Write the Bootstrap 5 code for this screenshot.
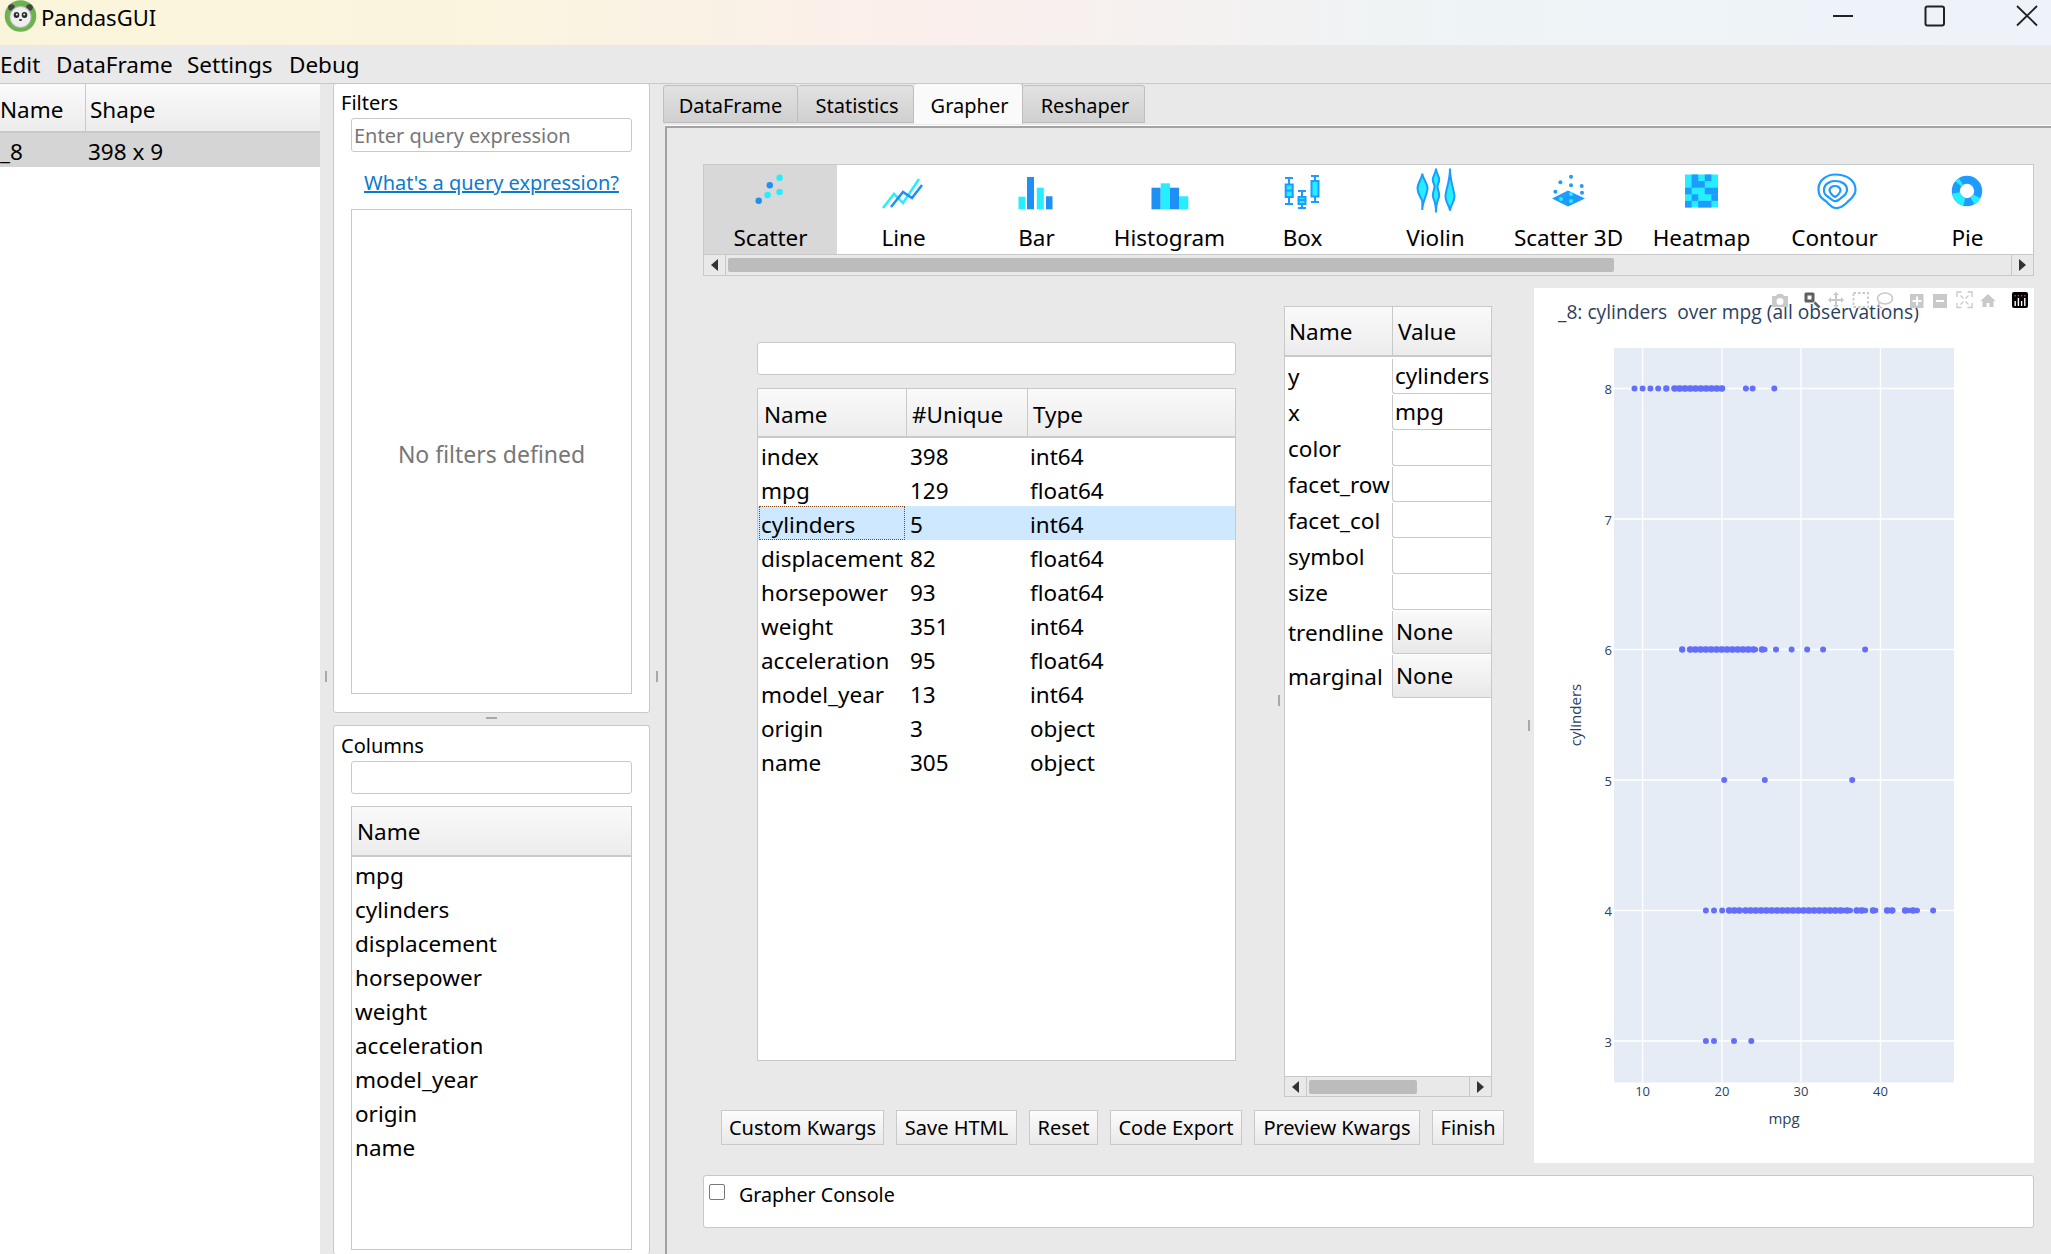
<!DOCTYPE html>
<html lang="en">
<head>
<meta charset="utf-8">
<title>PandasGUI</title>
<link href="https://cdn.jsdelivr.net/npm/bootstrap@5.3.0/dist/css/bootstrap.min.css" rel="stylesheet">
<style>
:root{--line:#c9c9c9;--bg:#e9e9e9;--fs:22.5px}
html,body{height:100%}
body{background:var(--bg);font-family:"Noto Sans","Open Sans",sans-serif;font-size:var(--fs);line-height:1.2;color:#000;overflow:hidden}
.titlebar{height:45px;background:linear-gradient(90deg,#faf5da 0%,#faf4e0 25%,#fbefec 45%,#eef4f6 72%,#eef3fb 100%);position:relative}
.logo{margin-left:4px;width:34px;height:34px;flex:none}
.app-title{margin-left:3px;margin-top:4px;font-size:22px}
.menubar{height:39px;border-bottom:1px solid var(--line);background:var(--bg);padding-top:6px;gap:0}
.menubar span{display:block}
.m1{width:56px}.m2{width:131px}.m3{width:102px}
.hdr{background:linear-gradient(#fafafa,#ececec);border-bottom:2px solid var(--line)}
.left{width:320px;background:#fff;flex:none;position:relative}
.grid-df{display:grid;grid-template-columns:85px 1fr}
.df-h{height:47px;display:flex;align-items:center;padding-top:4px}
.df-h+.df-h{border-left:1px solid var(--line);padding-left:4px}
.df-r{height:34px;background:#d5d5d5;display:flex;align-items:center;padding-top:2px}
.df-r+.df-r{padding-left:3px}
.split-v{width:13px;flex:none;position:relative}
.grip-v{position:absolute;width:2px;height:11px;background:#a8a8a8}
.grip-h{position:absolute;height:2px;width:11px;background:#a8a8a8}
.side{width:317px;flex:none;display:flex;flex-direction:column;margin-top:-1px}
.group{background:#fff;border:1px solid var(--line);border-radius:3px;padding:0 17px 0 17px}
.g-filters{height:630px;margin-bottom:12px;position:relative}
.g-cols{flex:1;border-bottom:0}
.g-label{font-size:20px;margin-left:-10px;height:34px;padding-top:7px}
.g-cols .g-label{height:35px;padding-top:8px}
.form-control.qt{height:34px;border:1px solid var(--line);border-radius:3px;padding:3px 2px 1px;font-size:20px;background:#fff;color:#777;line-height:28px;box-shadow:none}
a.q-link{display:block;text-align:center;color:#0a7bd0;font-size:20px;margin-top:19px;margin-bottom:12px;height:26px}
.nofilter{height:485px;border:1px solid var(--line);color:#777;display:flex;align-items:center;justify-content:center;padding-top:7px;font-size:23px}
.tree{border:1px solid var(--line);background:#fff}
.cols-input{height:33px!important}
.cols-tree{margin-top:12px;height:444px}
.cols-h{height:50px;padding-left:5px;display:flex;align-items:center;padding-top:1px}
.row-h{height:34px;display:flex;align-items:center;padding-left:3px}
.row-h.first{margin-top:1px}
.pane-col{flex:1;min-width:0;margin-left:15px;display:flex;flex-direction:column}
.nav-tabs.qt{border:0;height:42px;margin-left:-2px;padding-top:1px;gap:0;flex-wrap:nowrap}
.nav-tabs.qt .nav-link{height:38px;margin:0;padding:3px 0 0;border:1px solid #bdbdbd;border-bottom:1px solid #bdbdbd;border-radius:3px 3px 0 0;background:linear-gradient(#e2e2e2,#d0d0d0);color:#000;display:flex;align-items:center;justify-content:center;font-size:20px}
.nav-tabs.qt .t1{width:135px}
.nav-tabs.qt .t2{width:116px;border-left:0;padding-left:3px}
.nav-tabs.qt .t3{width:109px;height:41px;margin-top:-2px;background:#fafafa;border-bottom:0;border-left:0;padding-left:3px}
.nav-tabs.qt .t4{width:122px;border-left:0;padding-left:3px}
.pane{flex:1;border-top:2px solid #a3a3a3;border-left:2px solid #a3a3a3;box-shadow:0 -1px 0 #fff;padding:36px 17px 0 36px;min-height:0}
.charts{height:112px;border:1px solid var(--line);background:#fff;display:flex;flex-direction:column}
.chart-items{display:flex;height:90px}
.chart-item{width:133px;flex:none;text-align:center}
.chart-item.on{background:#d8d8d8}
.chart-item svg{display:block;margin:2px 0 0 calc(50% - 25px);width:48px;height:48px}
.chart-item span{display:block;margin-top:9px;line-height:28px}
.sb{background:var(--bg);border-top:1px solid var(--line);display:flex;align-items:center;height:21px}
.sb .ar{flex:none;width:22px;height:100%;display:flex;align-items:center;justify-content:center}
.sb .tr{flex:1;position:relative;height:100%;display:flex;align-items:center}
.sb .th{height:14px;background:#bcbcbc;border-radius:2px}
.sb .l{border-right:1px solid var(--line)}.sb .r{border-left:1px solid var(--line)}
.th-main{width:886px;margin-left:2px}
.th-par{width:108px;margin-left:2px}
.work{display:flex;height:875px;margin-top:12px}
.work-l{width:831px;flex:none;display:flex;flex-direction:column;position:relative}
.top-row{display:flex;height:810px}
.col-a{width:581px;flex:none;padding:54px 48px 37px 54px;display:flex;flex-direction:column}
.col-a .form-control.qt{height:33px;flex:none}
.t-main{margin-top:13px;flex:1;position:relative}
.g3{display:grid;grid-template-columns:148px 121px 1fr}
.hcell{display:flex;align-items:center;padding-left:5px;padding-top:3px;border-left:1px solid var(--line)}
.hcell:first-child{border-left:0;padding-left:6px}
.g3.rw{height:34px;align-items:center}
.g3.rw>div{padding-left:3px;padding-top:3px}
.g3.rw>div+div{padding-left:4px}
.g3.rw>div+div+div{padding-left:3px}
.g3.rw.sel{background:#cde8ff;position:relative}
.g3.rw.sel>div:first-child{outline:1px dotted #7a4a1a;outline-offset:-1px;height:34px;margin-left:1px;padding-left:2px;display:flex;align-items:center;width:146px}
.hdr-full{height:49px;display:grid;grid-template-columns:148px 121px 1fr}
.par{width:208px;flex:none;margin-top:18px;margin-bottom:1px;display:flex;flex-direction:column;background:#fff;border:1px solid var(--line);border-bottom:0;position:relative}
.par-h{display:grid;grid-template-columns:107px 1fr;height:50px;flex:none}
.par-h .hcell{padding-top:1px}
.par-h .hcell:first-child{padding-left:4px}
.par-rows{flex:1;min-height:0;padding-top:1px}
.par-row{display:grid;grid-template-columns:107px 1fr;height:36px;align-items:center}
.par-row.cb{height:44px}
.par-row .n{padding-left:3px;white-space:nowrap}
.val{height:35px;border:1px solid var(--line);border-right:0;border-top:0;border-radius:0 0 0 3px;padding-left:2px;display:flex;align-items:center;background:#fff}
.val.cbx{height:43px;background:linear-gradient(#fafafa,#e8e8e8);padding-left:3px}
.par .sb{height:21px;border-bottom:1px solid var(--line);margin:0 -1px;border-left:1px solid var(--line);border-right:1px solid var(--line)}
.btns{display:flex;gap:12px;margin-top:12px;padding-left:18px}
.btn.qt{height:35px;padding:0;border:1px solid var(--line);border-radius:0;background:linear-gradient(#fcfcfc,#e9e9e9);color:#000;font-size:20px;line-height:1;display:flex;align-items:center;justify-content:center}
.b1{width:163px}.b2{width:121px}.b3{width:69px}.b4{width:132px}.b5{width:166px}.b6{width:72px}
.plot{width:500px;flex:none;background:#fff;position:relative}
.plot svg{display:block}
.console{height:53px;margin-top:12px;border:1px solid var(--line);border-radius:3px;background:#fff;padding:7px 5px;display:flex;gap:14px;font-size:19.7px;line-height:1.2}
.console .form-check-input{width:16px;height:16px;margin:1px 0 0;border:1px solid #777;border-radius:2px;flex:none}
.g1{left:5px;top:587px}.g2{left:152px;bottom:-7px}.g3g{left:575px;top:407px}.g4{left:825px;top:432px}.g5{left:-9px;top:587px}
</style>
</head>
<body class="d-flex flex-column">
<header class="titlebar d-flex align-items-start">
<svg class="logo" viewBox="0 0 34 34"><circle cx="16.500" cy="16" r="15.800" fill="#6cb24e"/><circle cx="7.500" cy="7.500" r="3.300" fill="#444"/><circle cx="25.500" cy="7.500" r="3.300" fill="#444"/><circle cx="16.500" cy="17" r="11" fill="#bdbdbd"/><circle cx="16.500" cy="17" r="10" fill="#efefef"/><ellipse cx="12.500" cy="15" rx="2.800" ry="3" fill="#2a2a2a"/><ellipse cx="20.500" cy="15" rx="2.800" ry="3" fill="#2a2a2a"/><circle cx="12.800" cy="14.600" r="1" fill="#eee"/><circle cx="20.200" cy="14.600" r="1" fill="#eee"/><ellipse cx="16.500" cy="20" rx="1.600" ry="1" fill="#333"/></svg>
<span class="app-title">PandasGUI</span>
<div class="ms-auto d-flex align-items-center">
<svg width="218" height="45" viewBox="1833 0 218 45" fill="none" stroke="#222"><path d="M1833 16h20" stroke-width="2"/><rect x="1925.500" y="6.500" width="18.500" height="19" rx="2" stroke-width="2"/><path d="M2017 6l20 19.500M2037 6l-20 19.500" stroke-width="1.800"/></svg>
</div>
</header>
<nav class="menubar d-flex">
<span class="m1">Edit</span><span class="m2">DataFrame</span><span class="m3">Settings</span><span>Debug</span>
</nav>
<main class="d-flex flex-grow-1 overflow-hidden">
<aside class="left">
<div class="grid-df hdr"><div class="df-h">Name</div><div class="df-h">Shape</div></div>
<div class="grid-df"><div class="df-r">_8</div><div class="df-r">398 x 9</div></div>
</aside>
<div class="split-v"><i class="grip-v g1"></i></div>
<section class="side">
<div class="group g-filters">
<div class="g-label">Filters</div>
<div class="form-control qt">Enter query expression</div>
<a class="q-link" href="#">What's a query expression?</a>
<div class="nofilter">No filters defined</div>
<i class="grip-h g2"></i>
</div>
<div class="group g-cols">
<div class="g-label">Columns</div>
<div class="form-control qt cols-input"></div>
<div class="tree cols-tree">
<div class="hdr cols-h">Name</div>
<div class="row-h first">mpg</div><div class="row-h">cylinders</div><div class="row-h">displacement</div><div class="row-h">horsepower</div><div class="row-h">weight</div><div class="row-h">acceleration</div><div class="row-h">model_year</div><div class="row-h">origin</div><div class="row-h">name</div>
</div>
</div>
</section>
<section class="pane-col position-relative">
<i class="grip-v g5"></i>
<ul class="nav nav-tabs qt">
<li class="nav-item"><a class="nav-link t1" href="#">DataFrame</a></li>
<li class="nav-item"><a class="nav-link t2" href="#">Statistics</a></li>
<li class="nav-item"><a class="nav-link active t3" href="#">Grapher</a></li>
<li class="nav-item"><a class="nav-link t4" href="#">Reshaper</a></li>
</ul>
<div class="pane">
<div class="charts">
<div class="chart-items">
<div class="chart-item on"><svg viewBox="746 167 48 48"><circle cx="779.600" cy="177.700" r="3.200" fill="#25eeff"/><circle cx="769.800" cy="185.300" r="3.200" fill="#1e8ff5"/><circle cx="779.600" cy="192" r="3.200" fill="#25eeff"/><circle cx="767.600" cy="195" r="3.200" fill="#25eeff"/><circle cx="758.700" cy="200.700" r="3.200" fill="#1e8ff5"/></svg><span>Scatter</span></div>
<div class="chart-item"><svg viewBox="879 167 48 48" fill="none" stroke-width="2.500"><path d="M883 208l11-14 9 9 16-24" stroke="#25eeff"/><path d="M891 207l12-15 9 6 10-13" stroke="#1e8ff5"/></svg><span>Line</span></div>
<div class="chart-item"><svg viewBox="1012 167 48 48"><rect x="1018.500" y="196.700" width="7" height="12.600" fill="#25eeff"/><rect x="1027" y="177" width="7" height="32.300" fill="#1e8ff5"/><rect x="1036.800" y="187.700" width="7" height="21.600" fill="#25eeff"/><rect x="1046" y="196.300" width="6.500" height="13" fill="#1e8ff5"/></svg><span>Bar</span></div>
<div class="chart-item"><svg viewBox="1145 167 48 48"><rect x="1151.500" y="187.700" width="9.200" height="21.600" fill="#1e8ff5"/><rect x="1160.700" y="183.300" width="9.200" height="26" fill="#25eeff"/><rect x="1169.900" y="187.700" width="9.200" height="21.600" fill="#1e8ff5"/><rect x="1179.100" y="196.300" width="9.200" height="13" fill="#25eeff"/></svg><span>Histogram</span></div>
<div class="chart-item"><svg viewBox="1278 167 48 48" stroke="#1e9bff" stroke-width="2" fill="#25eeff"><path d="M1285 178h8M1289 178v6M1289 197v7M1285 204h8M1298 191h8M1302 191v6M1302 204v4M1298 208h8M1311 176h8M1315 176v5M1315 197v5M1311 202h8" fill="none"/><rect x="1285.700" y="184.500" width="7" height="12.500"/><path d="M1286 190.500h6"/><rect x="1298.500" y="197" width="7" height="7"/><path d="M1298.500 200h7"/><rect x="1311.500" y="181" width="7" height="15.500"/></svg><span>Box</span></div>
<div class="chart-item"><svg viewBox="1411 167 48 48" stroke="#1e9bff" stroke-width="2" fill="#25eeff"><path d="M1422.300 173.500C1422.300 178 1417.500 183 1417.500 188.500S1421 197 1422.300 201L1422.300 210C1422.300 202 1427.500 194 1427.500 188.500S1422.300 178 1422.300 173.500Z"/><path d="M1436 168.500C1436 173 1432.800 176 1432.800 179.500S1434.500 184 1434.500 186.500S1432.800 192 1432.800 195.500S1436 200 1436 212.500C1436 200 1439.200 199 1439.200 195.500S1437.500 189 1437.500 186.500S1439.200 183 1439.200 179.500S1436 173 1436 168.500Z"/><path d="M1450 168.500C1450 182 1445.500 190 1445.500 196.500S1449 204 1450 210.500C1451 204 1454.500 202 1454.500 196.500S1450 182 1450 168.500Z"/></svg><span>Violin</span></div>
<div class="chart-item"><svg viewBox="1544 167 48 48"><path d="M1568 190.500l17 8-17 8-16-8z" fill="#1e9bff"/><g fill="#1e9bff"><circle cx="1571" cy="176.700" r="2"/><circle cx="1560.400" cy="182.300" r="2"/><circle cx="1571" cy="185.300" r="2"/><circle cx="1581.700" cy="186" r="2"/><circle cx="1555.400" cy="191.700" r="2"/><circle cx="1582" cy="192.700" r="2"/></g><g fill="#25eeff"><circle cx="1571" cy="194" r="2"/><circle cx="1561" cy="199" r="2"/><circle cx="1571" cy="201" r="2"/></g></svg><span>Scatter 3D</span></div>
<div class="chart-item"><svg viewBox="1677 167 48 48"><rect x="1685" y="174.500" width="33" height="33" fill="#25eeff"/><g fill="#1e9bff"><rect x="1691.600" y="174.500" width="6.600" height="6.600"/><rect x="1704.800" y="174.500" width="6.600" height="6.600"/><rect x="1691.600" y="181.100" width="13.200" height="6.600"/><rect x="1685" y="187.700" width="6.600" height="6.600"/><rect x="1704.800" y="187.700" width="13.200" height="6.600"/><rect x="1691.600" y="194.300" width="6.600" height="6.600"/><rect x="1711.400" y="194.300" width="6.600" height="6.600"/><rect x="1685" y="200.900" width="6.600" height="6.600"/><rect x="1698.200" y="200.900" width="13.200" height="6.600"/></g></svg><span>Heatmap</span></div>
<div class="chart-item"><svg viewBox="1810 167 48 48" fill="none" stroke="#1e9bff" stroke-width="2.200"><path d="M1835 174.500c11 0 20.500 5 20.500 15.500 0 6-4.500 8.500-8.500 12.500-3 3-7.500 6-12 5.500-5-1-6.500-5.500-11.500-8.500-3-2-5-5.500-5-10.500 0-9.500 9.500-14.500 16.500-14.500z"/><path d="M1835 181c6.500 0 12 3 12 9 0 4-3 6-6 8-2 2-4 4-7 3-3-1-4-3-7-5-2-1-3-3-3-6 0-6 6-9 11-9z"/><path d="M1835 186c3 0 5.500 2 5.500 4 0 3-3.500 6-5.500 7-2-1-5.500-4-5.500-7 0-2 2.500-4 5.500-4z"/></svg><span>Contour</span></div>
<div class="chart-item"><svg viewBox="1943 167 48 48" fill="none" stroke-width="8"><circle cx="1967" cy="191" r="11.200" stroke="#1e9bff"/><circle cx="1967" cy="191" r="11.200" stroke="#25eeff" pathLength="100" stroke-dasharray="9 12 18 14 5 42" stroke-dashoffset="-8"/></svg><span>Pie</span></div>
</div>
<div class="sb"><div class="ar l"><svg width="9" height="12" viewBox="0 0 9 12"><path d="M8 0v12L1 6z" fill="#333"/></svg></div><div class="tr"><div class="th th-main"></div></div><div class="ar r"><svg width="9" height="12" viewBox="0 0 9 12"><path d="M1 0v12l7-6z" fill="#333"/></svg></div></div>
</div>
<div class="work">
<div class="work-l">
<div class="top-row">
<div class="col-a">
<div class="form-control qt"></div>
<div class="tree t-main">
<div class="hdr hdr-full"><div class="hcell">Name</div><div class="hcell">#Unique</div><div class="hcell">Type</div></div>
<div class="g3 rw"><div>index</div><div>398</div><div>int64</div></div>
<div class="g3 rw"><div>mpg</div><div>129</div><div>float64</div></div>
<div class="g3 rw sel"><div>cylinders</div><div>5</div><div>int64</div></div>
<div class="g3 rw"><div>displacement</div><div>82</div><div>float64</div></div>
<div class="g3 rw"><div>horsepower</div><div>93</div><div>float64</div></div>
<div class="g3 rw"><div>weight</div><div>351</div><div>int64</div></div>
<div class="g3 rw"><div>acceleration</div><div>95</div><div>float64</div></div>
<div class="g3 rw"><div>model_year</div><div>13</div><div>int64</div></div>
<div class="g3 rw"><div>origin</div><div>3</div><div>object</div></div>
<div class="g3 rw"><div>name</div><div>305</div><div>object</div></div>
</div>
</div>
<i class="grip-v g3g"></i>
<div class="par">
<div class="par-h hdr"><div class="hcell">Name</div><div class="hcell">Value</div></div>
<div class="par-rows">
<div class="par-row"><div class="n">y</div><div class="val">cylinders</div></div>
<div class="par-row"><div class="n">x</div><div class="val">mpg</div></div>
<div class="par-row"><div class="n">color</div><div class="val"></div></div>
<div class="par-row"><div class="n">facet_row</div><div class="val"></div></div>
<div class="par-row"><div class="n">facet_col</div><div class="val"></div></div>
<div class="par-row"><div class="n">symbol</div><div class="val"></div></div>
<div class="par-row"><div class="n">size</div><div class="val"></div></div>
<div class="par-row cb"><div class="n">trendline</div><div class="val cbx">None</div></div>
<div class="par-row cb"><div class="n">marginal</div><div class="val cbx">None</div></div>
</div>
<div class="sb"><div class="ar l"><svg width="9" height="12" viewBox="0 0 9 12"><path d="M8 0v12L1 6z" fill="#333"/></svg></div><div class="tr"><div class="th th-par"></div></div><div class="ar r"><svg width="9" height="12" viewBox="0 0 9 12"><path d="M1 0v12l7-6z" fill="#333"/></svg></div></div>
</div>
</div>
<div class="btns">
<button class="btn qt b1">Custom Kwargs</button>
<button class="btn qt b2">Save HTML</button>
<button class="btn qt b3">Reset</button>
<button class="btn qt b4">Code Export</button>
<button class="btn qt b5">Preview Kwargs</button>
<button class="btn qt b6">Finish</button>
</div>
<i class="grip-v g4"></i>
</div>
<div class="plot">
<svg width="500" height="875" viewBox="1534 288 500 875" font-family="Open Sans,sans-serif" fill="#2a3f5f">
<rect x="1614" y="348" width="340" height="734.500" fill="#e5ecf6"/>
<g stroke="#fff" stroke-width="1.300"><path d="M1642.600 348v734.500M1722 348v734.500M1801 348v734.500M1880.500 348v734.500"/><path d="M1614 388.500h340M1614 519h340M1614 649.500h340M1614 780h340M1614 910.500h340M1614 1041h340"/></g>
<g fill="#636efa"><circle cx="1634.500" cy="388.500" r="3"/><circle cx="1642.600" cy="388.500" r="3"/><circle cx="1650.400" cy="388.500" r="3"/><circle cx="1658.200" cy="388.500" r="3"/><circle cx="1666.300" cy="388.500" r="3.200"/><circle cx="1745.900" cy="388.500" r="3"/><circle cx="1752.600" cy="388.500" r="3"/><circle cx="1774.300" cy="388.500" r="3"/><circle cx="1682.200" cy="649.500" r="3.200"/><circle cx="1776" cy="649.500" r="3"/><circle cx="1791.600" cy="649.500" r="3"/><circle cx="1807.200" cy="649.500" r="3"/><circle cx="1823.100" cy="649.500" r="3"/><circle cx="1865.100" cy="649.500" r="3"/><circle cx="1724.200" cy="780" r="3"/><circle cx="1764.800" cy="780" r="3"/><circle cx="1852.200" cy="780" r="3"/><circle cx="1705.900" cy="910.500" r="3"/><circle cx="1714" cy="910.500" r="3"/><circle cx="1722.200" cy="910.500" r="3"/><circle cx="1933.100" cy="910.500" r="3"/><circle cx="1705.900" cy="1041" r="3"/><circle cx="1714" cy="1041" r="3"/><circle cx="1734" cy="1041" r="3"/><circle cx="1751.300" cy="1041" r="3"/></g>
<g fill="none" stroke="#636efa" stroke-linecap="round"><path stroke-width="5.600" d="M1674.400 388.500h47.800M1690 649.500h65.400M1762 649.500h2.800M1729 910.500h11M1745.200 910.500h98.800M1846.800 910.500h3.400M1856.600 910.500h8.800M1872.900 910.500h2.700M1887 910.500h5.500M1905 910.500h3.800M1912.800 910.500h4.400"/><path stroke-width="6.300" stroke-dasharray="0 5.300" d="M1674.400 388.500h47.800M1690 649.500h65.400M1762 649.500h2.800M1729 910.500h11M1745.200 910.500h98.800M1846.800 910.500h3.400M1856.600 910.500h8.800M1872.900 910.500h2.700M1887 910.500h5.500M1905 910.500h3.800M1912.800 910.500h4.400"/></g>
<text x="1558" y="319" font-size="19.200" xml:space="preserve">_8: cylinders  over mpg (all observations)</text>
<g font-size="13" text-anchor="end"><text x="1612" y="394">8</text><text x="1612" y="525">7</text><text x="1612" y="655">6</text><text x="1612" y="786">5</text><text x="1612" y="916">4</text><text x="1612" y="1047">3</text></g>
<g font-size="13" text-anchor="middle"><text x="1642.600" y="1096">10</text><text x="1722" y="1096">20</text><text x="1801" y="1096">30</text><text x="1880.500" y="1096">40</text></g>
<text x="1784" y="1124" font-size="15" text-anchor="middle">mpg</text>
<text transform="translate(1581 715) rotate(-90)" font-size="15" text-anchor="middle">cylinders</text>
<g fill="#c9c9c9"><path d="M1772 296h4l1.500-2h5l1.500 2h4v11h-16zM1780 298a3.500 3.500 0 100 7 3.500 3.500 0 000-7z" fill-rule="evenodd"/><path d="M1806 294h7v7h-7z" fill="none" stroke="#5f5f5f" stroke-width="3" stroke-linejoin="round"/><path d="M1814.500 302.500l5 5" stroke="#5f5f5f" stroke-width="2.500"/><path d="M1836 292l3 3h-2v4h4v-2l3 3-3 3v-2h-4v4h2l-3 3-3-3h2v-4h-4v2l-3-3 3-3v2h4v-4h-2z"/><rect x="1853.500" y="293" width="14.500" height="14" fill="none" stroke="#c9c9c9" stroke-width="1.800" stroke-dasharray="2.500 2"/><ellipse cx="1885" cy="298.500" rx="7.500" ry="5.500" fill="none" stroke="#c9c9c9" stroke-width="1.600"/><path d="M1879 303c-1 3 1 4 3 5" fill="none" stroke="#c9c9c9" stroke-width="1.600"/><path d="M1910 294h13.500v14h-13.500zM1916 296.500v3.500h-3.500v2h3.500v3.500h2V302h3.500v-2H1918v-3.500z" fill-rule="evenodd"/><path d="M1933 294h14v14h-14zM1936 300v2h8v-2z" fill-rule="evenodd"/><path d="M1957 297v-5h4.500M1967.500 292h4.500v5M1972 303v4.500h-4.500M1961.500 307.500H1957V303" fill="none" stroke="#c9c9c9" stroke-width="1.300"/><path d="M1960.500 295.500l3 3M1968.500 295.500l-3 3M1960.500 304.500l3-3M1968.500 304.500l-3-3" stroke="#c9c9c9" stroke-width="1.300"/><path d="M1988 294l7.500 7h-2v6h-4v-4h-3v4h-4v-6h-2z"/><rect x="2012" y="292" width="16" height="16" rx="2" fill="#000"/></g>
<g fill="#fff"><rect x="2014.500" y="301" width="1.400" height="5"/><rect x="2017.700" y="298" width="1.400" height="8"/><rect x="2020.900" y="301" width="1.400" height="5"/><rect x="2024.100" y="298" width="1.400" height="8"/></g><g fill="#e8324a"><rect x="2014.500" y="295" width="1.400" height="1.400"/><rect x="2017.700" y="295" width="1.400" height="1.400"/><rect x="2020.900" y="295" width="1.400" height="1.400"/><rect x="2024.100" y="295" width="1.400" height="1.400"/></g>
</svg>
</div>
</div>
<div class="console"><input class="form-check-input" type="checkbox" aria-label="Grapher Console"><span>Grapher Console</span></div>
</div>
</section>
</main>
<script src="https://cdn.jsdelivr.net/npm/bootstrap@5.3.0/dist/js/bootstrap.bundle.min.js"></script>
</body>
</html>
